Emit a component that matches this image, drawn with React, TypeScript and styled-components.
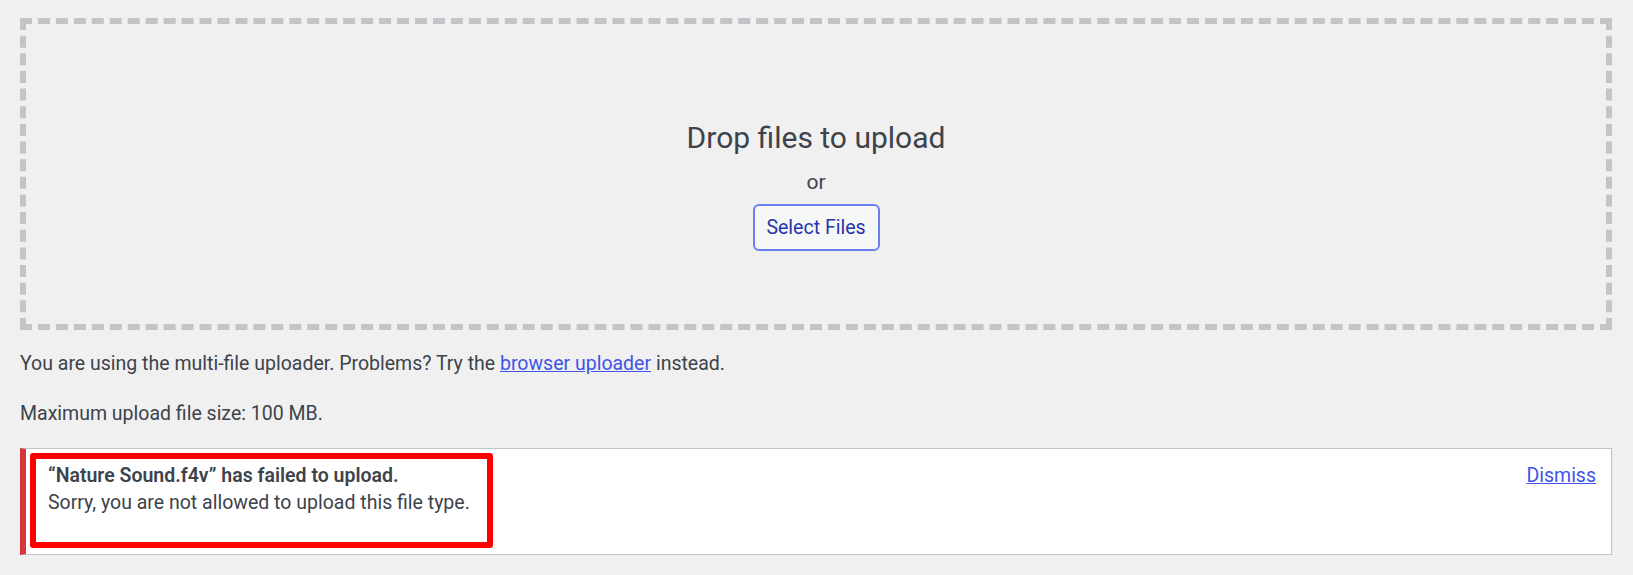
import React from "react";
import styled, { createGlobalStyle } from "styled-components";

const GlobalStyle = createGlobalStyle`
  html, body {
    margin: 0;
    padding: 0;
    background: #f0f0f1;
  }
  body {
    font-family: Roboto, "Liberation Sans", sans-serif;
    color: #3c434a;
  }
`;

const Page = styled.div`
  padding: 18px 21px 0 20px;
`;

const DropArea = styled.div`
  height: 312px;
  box-sizing: border-box;
  border: 6px dashed #c3c4c7;
  display: flex;
  flex-direction: column;
  align-items: center;
  padding-top: 96px;
`;

const DropTitle = styled.p`
  margin: 0;
  font-size: 30px;
  line-height: 36px;
`;

const Or = styled.p`
  margin: 11px 0 7px;
  font-size: 21px;
  line-height: 30px;
`;

const SelectButton = styled.button`
  width: 127px;
  height: 47px;
  border: 2px solid #6b7ff0;
  border-radius: 6px;
  background: #f6f7f7;
  color: #2635ad;
  font-family: inherit;
  font-size: 19.5px;
`;

const Info = styled.p<{ $top: number }>`
  margin: 0;
  font-size: 19.5px;
  line-height: 30px;
  padding-top: ${(p) => p.$top}px;
`;

const Link = styled.a`
  color: #4154e8;
  text-decoration: underline;
  font-size: 19.5px;
  line-height: 27px;
`;

const Notice = styled.div`
  margin-top: 19px;
  background: #fff;
  border: 1px solid #c3c4c7;
  border-left: 6px solid #d63638;
  box-shadow: 0 2px 2px rgba(0, 0, 0, 0.06);
  height: 107px;
  box-sizing: border-box;
  display: flex;
  justify-content: space-between;
  align-items: flex-start;
  padding: 13px 15px 0 22px;
  position: relative;
`;

const Message = styled.div`
  font-size: 19.5px;
  line-height: 27px;
`;

const FileName = styled.strong`
  display: block;
  font-weight: 600;
`;

const Highlight = styled.div`
  position: absolute;
  left: 4px;
  top: 4px;
  width: 463px;
  height: 95px;
  box-sizing: border-box;
  border: 6px solid #ff0000;
  border-radius: 3px;
  pointer-events: none;
`;

export default function App() {
  return (
    <>
      <GlobalStyle />
      <Page>
        <DropArea>
          <DropTitle>Drop files to upload</DropTitle>
          <Or>or</Or>
          <SelectButton type="button">Select Files</SelectButton>
        </DropArea>
        <Info $top={19}>
          You are using the multi-file uploader. Problems? Try the{" "}
          <Link href="#">browser uploader</Link> instead.
        </Info>
        <Info $top={20}>Maximum upload file size: 100 MB.</Info>
        <Notice>
          <Message>
            <FileName>“Nature Sound.f4v” has failed to upload.</FileName>
            Sorry, you are not allowed to upload this file type.
          </Message>
          <Link href="#">Dismiss</Link>
          <Highlight />
        </Notice>
      </Page>
    </>
  );
}
